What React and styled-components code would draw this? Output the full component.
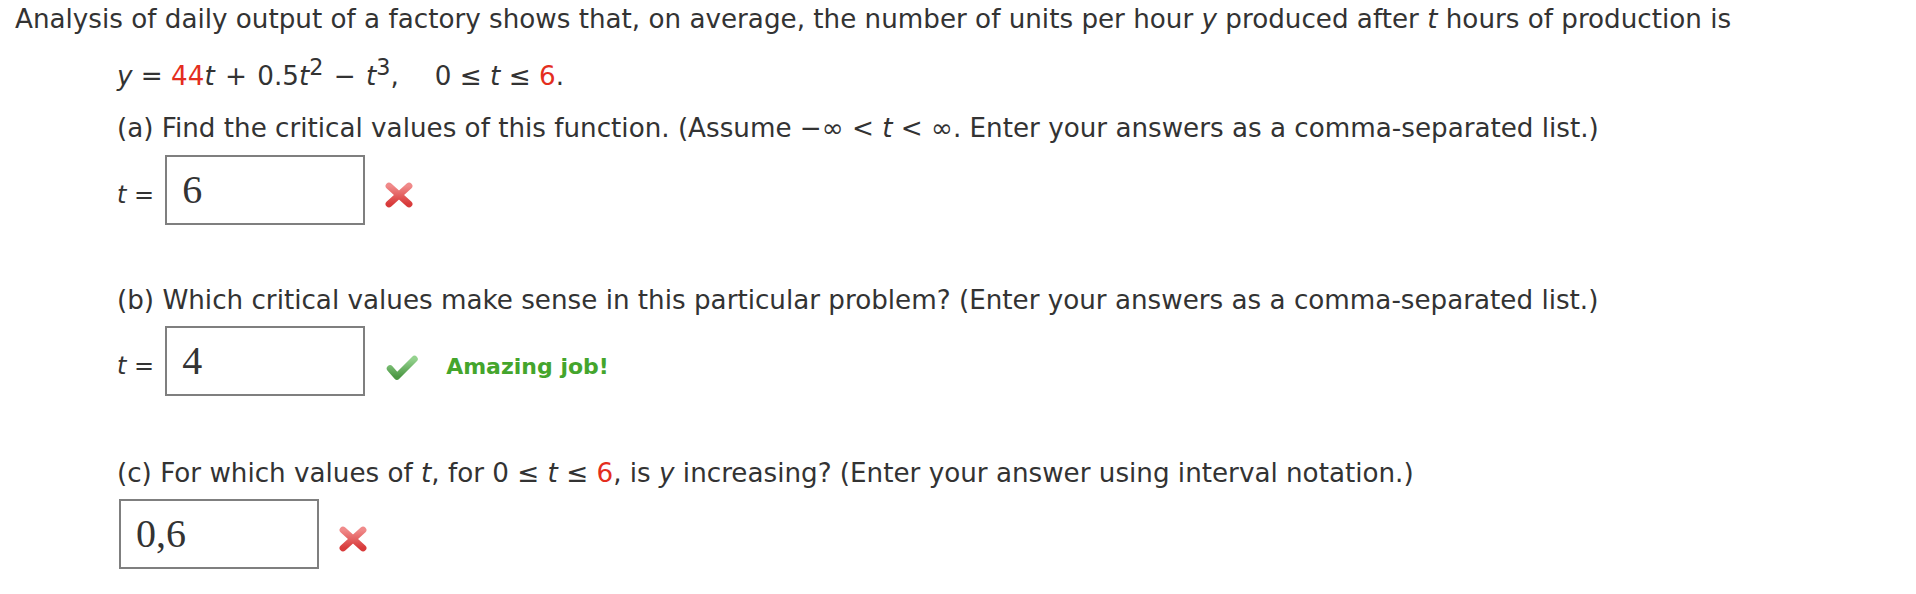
import React from 'react';
import styled, { createGlobalStyle } from 'styled-components';

const GlobalStyle = createGlobalStyle`
  html, body { margin: 0; padding: 0; background: #fff; }
  body { font-family: "DejaVu Sans", Verdana, sans-serif; color: #333; }
`;

const Page = styled.div`
  padding-left: 15px;
  font-size: 26.2px;
  line-height: 38px;
`;

const Intro = styled.p`
  margin: 0;
`;

const Indented = styled.div`
  margin-left: 102px;
`;

const Equation = styled.p`
  margin: 19px 0 0;
  white-space: pre;
`;

const Prompt = styled.p`
  margin: ${(p) => p.$top}px 0 0;
`;

const Var = styled.i`
  font-style: italic;
`;

const Red = styled.span`
  color: #e42e1e;
`;

const Op = styled.span`
  margin: 0 2px;
`;

const Gap = styled.span`
  display: inline-block;
  width: 36px;
`;

const Sup = styled.sup`
  font-size: 0.85em;
  line-height: 0;
  vertical-align: 0.45em;
`;

const AnswerRow = styled.div`
  display: flex;
  align-items: baseline;
  margin-top: ${(p) => p.$top}px;
`;

const Label = styled.span`
  font-size: 24px;
  margin-right: 11px;
  white-space: pre;
`;

const AnswerBox = styled.div`
  box-sizing: border-box;
  width: 200px;
  height: 70px;
  border: 2px solid #7f7f7f;
  padding-left: 15px;
  margin-left: ${(p) => p.$offset || 0}px;
  font-family: "Liberation Serif", "Times New Roman", serif;
  font-size: 40px;
  line-height: 66px;
  color: #333;
`;

const Mark = styled.svg`
  flex: none;
  align-self: flex-start;
  margin-top: ${(p) => p.$top}px;
  margin-left: ${(p) => p.$left}px;
`;

const Feedback = styled.span`
  font-weight: bold;
  font-size: 22px;
  color: #44a52c;
  margin-left: 28px;
`;

function WrongMark({ id }) {
  return (
    <Mark width="28" height="26" viewBox="0 0 28 26" $top={27} $left={20}>
      <defs>
        <linearGradient id={id} x1="0" y1="0" x2="0" y2="1">
          <stop offset="0" stopColor="#f08a8a" />
          <stop offset="1" stopColor="#d83a3a" />
        </linearGradient>
      </defs>
      <g stroke={`url(#${id})`} strokeWidth="6.8" strokeLinecap="round">
        <line x1="4" y1="4" x2="24" y2="22" />
        <line x1="24" y1="4" x2="4" y2="22" />
      </g>
    </Mark>
  );
}

function RightMark({ id }) {
  return (
    <Mark width="32" height="26" viewBox="0 0 32 26" $top={29} $left={21}>
      <defs>
        <linearGradient id={id} x1="0" y1="0" x2="0" y2="1">
          <stop offset="0" stopColor="#94d28e" />
          <stop offset="1" stopColor="#4c9844" />
        </linearGradient>
      </defs>
      <polyline
        points="4,13.5 11,21.5 28.5,4"
        fill="none"
        stroke={`url(#${id})`}
        strokeWidth="6.5"
        strokeLinecap="round"
        strokeLinejoin="round"
      />
    </Mark>
  );
}

export default function App() {
  return (
    <>
      <GlobalStyle />
      <Page>
        <Intro>
          Analysis of daily output of a factory shows that, on average, the number of units per hour <Var>y</Var> produced after <Var>t</Var> hours of production is
        </Intro>
        <Indented>
          <Equation>
            <Var>y</Var> = <Red>44</Red><Var>t</Var> <Op>+</Op> 0.5<Var>t</Var><Sup>2</Sup> <Op>−</Op> <Var>t</Var><Sup>3</Sup>,<Gap />0 ≤ <Var>t</Var> ≤ <Red>6</Red>.
          </Equation>
          <Prompt $top={14}>
            (a) Find the critical values of this function. (Assume −∞ &lt; <Var>t</Var> &lt; ∞. Enter your answers as a comma-separated list.)
          </Prompt>
          <AnswerRow $top={8}>
            <Label><Var>t</Var> =</Label>
            <AnswerBox>6</AnswerBox>
            <WrongMark id="xa" />
          </AnswerRow>
          <Prompt $top={56}>
            (b) Which critical values make sense in this particular problem? (Enter your answers as a comma-separated list.)
          </Prompt>
          <AnswerRow $top={7}>
            <Label><Var>t</Var> =</Label>
            <AnswerBox>4</AnswerBox>
            <RightMark id="cb" />
            <Feedback>Amazing job!</Feedback>
          </AnswerRow>
          <Prompt $top={58}>
            (c) For which values of <Var>t</Var>, for 0 ≤ <Var>t</Var> ≤ <Red>6</Red>, is <Var>y</Var> increasing? (Enter your answer using interval notation.)
          </Prompt>
          <AnswerRow $top={7}>
            <AnswerBox $offset={2}>0,6</AnswerBox>
            <WrongMark id="xc" />
          </AnswerRow>
        </Indented>
      </Page>
    </>
  );
}
